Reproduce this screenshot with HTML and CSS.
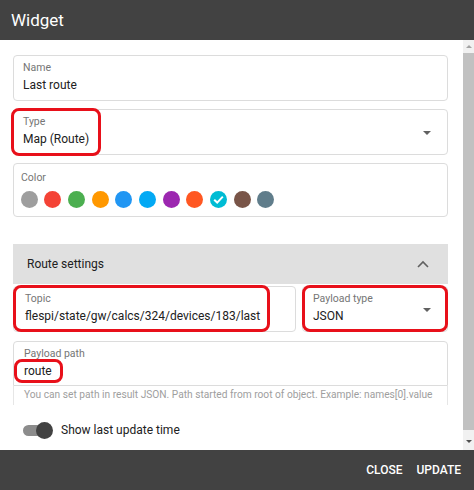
FILE: index.html
```html
<!DOCTYPE html>
<html>
<head>
<meta charset="utf-8">
<link rel="stylesheet" href="styles.css">
</head>
<body>
<div class="dialog">
  <div class="title">Widget</div>
  <div class="body">
    <div class="content">
      <div class="field">
        <div class="label">Name</div>
        <div class="value">Last route</div>
      </div>
      <div class="field select">
        <div class="label">Type</div>
        <div class="value">Map (Route)</div>
        <span class="caret"></span>
        <span class="mark mark-type"></span>
      </div>
      <div class="field colors">
        <div class="label">Color</div>
        <div class="swatches">
          <span class="sw" style="background:#9e9e9e"></span>
          <span class="sw" style="background:#f44336"></span>
          <span class="sw" style="background:#4caf50"></span>
          <span class="sw" style="background:#ff9800"></span>
          <span class="sw" style="background:#2196f3"></span>
          <span class="sw" style="background:#03a9f4"></span>
          <span class="sw" style="background:#9c27b0"></span>
          <span class="sw" style="background:#ff5722"></span>
          <span class="sw checked" style="background:#00bcd4"><svg width="17" height="17" viewBox="0 0 17 17"><path d="M4.2 8.8 L7.2 11.6 L12.8 5.6" fill="none" stroke="#fff" stroke-width="2"/></svg></span>
          <span class="sw" style="background:#795548"></span>
          <span class="sw" style="background:#607d8b"></span>
        </div>
      </div>
      <div class="panel-head">
        <span>Route settings</span>
        <svg width="12" height="8" viewBox="0 0 12 8"><path d="M1 7 L6 2 L11 7" fill="none" stroke="#616161" stroke-width="1.6"/></svg>
      </div>
      <div class="row">
        <div class="field topic">
          <div class="label">Topic</div>
          <div class="value">flespi/state/gw/calcs/324/devices/183/last</div>
          <span class="mark mark-topic"></span>
        </div>
        <div class="field select ptype">
          <div class="label">Payload type</div>
          <div class="value">JSON</div>
          <span class="caret"></span>
          <span class="mark mark-ptype"></span>
        </div>
      </div>
      <div class="field path">
        <div class="label">Payload path</div>
        <div class="value">route</div>
        <span class="mark mark-route"></span>
      </div>
      <div class="hint">You can set path in result JSON. Path started from root of object. Example: names[0].value</div>
      <div class="toggle-row">
        <span class="toggle"><span class="track"></span><span class="thumb"></span></span>
        <span class="toggle-label">Show last update time</span>
      </div>
    </div>
    <div class="scrollbar">
      <span class="arrow up"></span>
      <span class="thumbbar"></span>
      <span class="arrow down"></span>
    </div>
  </div>
  <div class="footer">
    <span class="btn">CLOSE</span>
    <span class="btn">UPDATE</span>
  </div>
</div>
</body>
</html>
```
FILE: styles.css
```css
* { box-sizing: border-box; }
html, body { margin: 0; padding: 0; }
body {
  font-family: Roboto, "Liberation Sans", sans-serif;
  background: #fff;
  color: #212121;
  width: 474px;
  height: 490px;
  overflow: hidden;
}
.dialog {
  display: flex;
  flex-direction: column;
  height: 490px;
}
.title {
  height: 40px;
  background: #424242;
  color: #fff;
  font-size: 17px;
  line-height: 40px;
  padding-left: 11px;
}
.body {
  height: 410px;
  display: flex;
}
.content {
  flex: 1;
  min-width: 0;
  padding: 15px 15px 0 13px;
  display: flex;
  flex-direction: column;
}
.field {
  position: relative;
  border: 1px solid #dcdcdc;
  border-radius: 4px;
  height: 46px;
  padding: 5px 9px 0;
  margin-bottom: 8px;
}
.label {
  font-size: 10.5px;
  line-height: 14px;
  color: #757575;
}
.value {
  font-size: 12px;
  line-height: 18px;
  margin-top: 1px;
  color: #212121;
  white-space: nowrap;
}
.caret {
  position: absolute;
  right: 16px;
  top: 21px;
  width: 0;
  height: 0;
  border-left: 4px solid transparent;
  border-right: 4px solid transparent;
  border-top: 4px solid #616161;
}
.mark {
  position: absolute;
  border: 3px solid #e8101a;
  border-radius: 8px;
}
.mark-type { left: -3px; top: -2px; width: 90px; height: 48px; }
.colors {
  height: 54px;
  padding: 7px 7px 0 6px;
}
.colors .label { padding-left: 1px; }
.swatches {
  display: flex;
  gap: 6.7px;
  margin-top: 5.5px;
  padding-left: 0.5px;
}
.sw {
  width: 17px;
  height: 17px;
  border-radius: 50%;
  display: block;
}
.sw svg { display: block; }
.panel-head {
  margin-top: 19px;
  height: 40px;
  background: #e0e0e0;
  display: flex;
  align-items: center;
  justify-content: space-between;
  padding: 0 19px 0 14px;
  font-size: 12px;
  color: #212121;
}
.row {
  display: flex;
  gap: 6px;
  margin-top: 2px;
  margin-bottom: 9px;
}
.row .field { margin-bottom: 0; }
.topic { width: 283px; flex: none; padding-left: 11px; }
.ptype { flex: 1; padding-left: 10px; }
.mark-topic { left: -1px; top: -2px; width: 257px; height: 47px; }
.mark-ptype { left: -1px; top: -2px; width: 146px; height: 47px; }
.path {
  height: 45px;
  margin-bottom: 0;
  padding-left: 10px;
  border-radius: 4px 4px 0 0;
}
.mark-route { left: 0; top: 17px; width: 49px; height: 24px; }
.hint {
  height: 19px;
  border-left: 1px solid #e6e6e6;
  border-right: 1px solid #e6e6e6;
  font-size: 10.2px;
  line-height: 18px;
  color: #9e9e9e;
  padding-left: 10px;
  white-space: nowrap;
  overflow: hidden;
}
.toggle-row {
  display: flex;
  align-items: center;
  height: 30px;
  margin-top: 10px;
  padding-left: 10px;
  gap: 8px;
}
.toggle {
  position: relative;
  width: 30px;
  height: 17px;
}
.track {
  position: absolute;
  left: 0;
  top: 3px;
  width: 28px;
  height: 11px;
  border-radius: 6px;
  background: #8c8c8c;
}
.thumb {
  position: absolute;
  left: 13px;
  top: 0;
  width: 17px;
  height: 17px;
  border-radius: 50%;
  background: #424242;
}
.toggle-label {
  font-size: 12px;
  color: #212121;
}
.scrollbar {
  width: 11px;
  flex: none;
  background: #f1f1f1;
  display: flex;
  flex-direction: column;
  align-items: center;
}
.arrow {
  width: 0;
  height: 0;
  border-left: 3px solid transparent;
  border-right: 3px solid transparent;
}
.arrow.up { border-bottom: 3px solid #a3a3a3; margin-top: 5px; }
.arrow.down { border-top: 3px solid #505050; margin-bottom: 7px; }
.thumbbar {
  flex: 1;
  width: 11px;
  background: #c1c1c1;
  margin: 5px 0 10px;
}
.footer {
  height: 40px;
  background: #424242;
  display: flex;
  justify-content: flex-end;
  align-items: center;
  gap: 14px;
  padding-right: 13px;
}
.btn {
  color: #fff;
  font-size: 12px;
  font-weight: 500;
}
```
